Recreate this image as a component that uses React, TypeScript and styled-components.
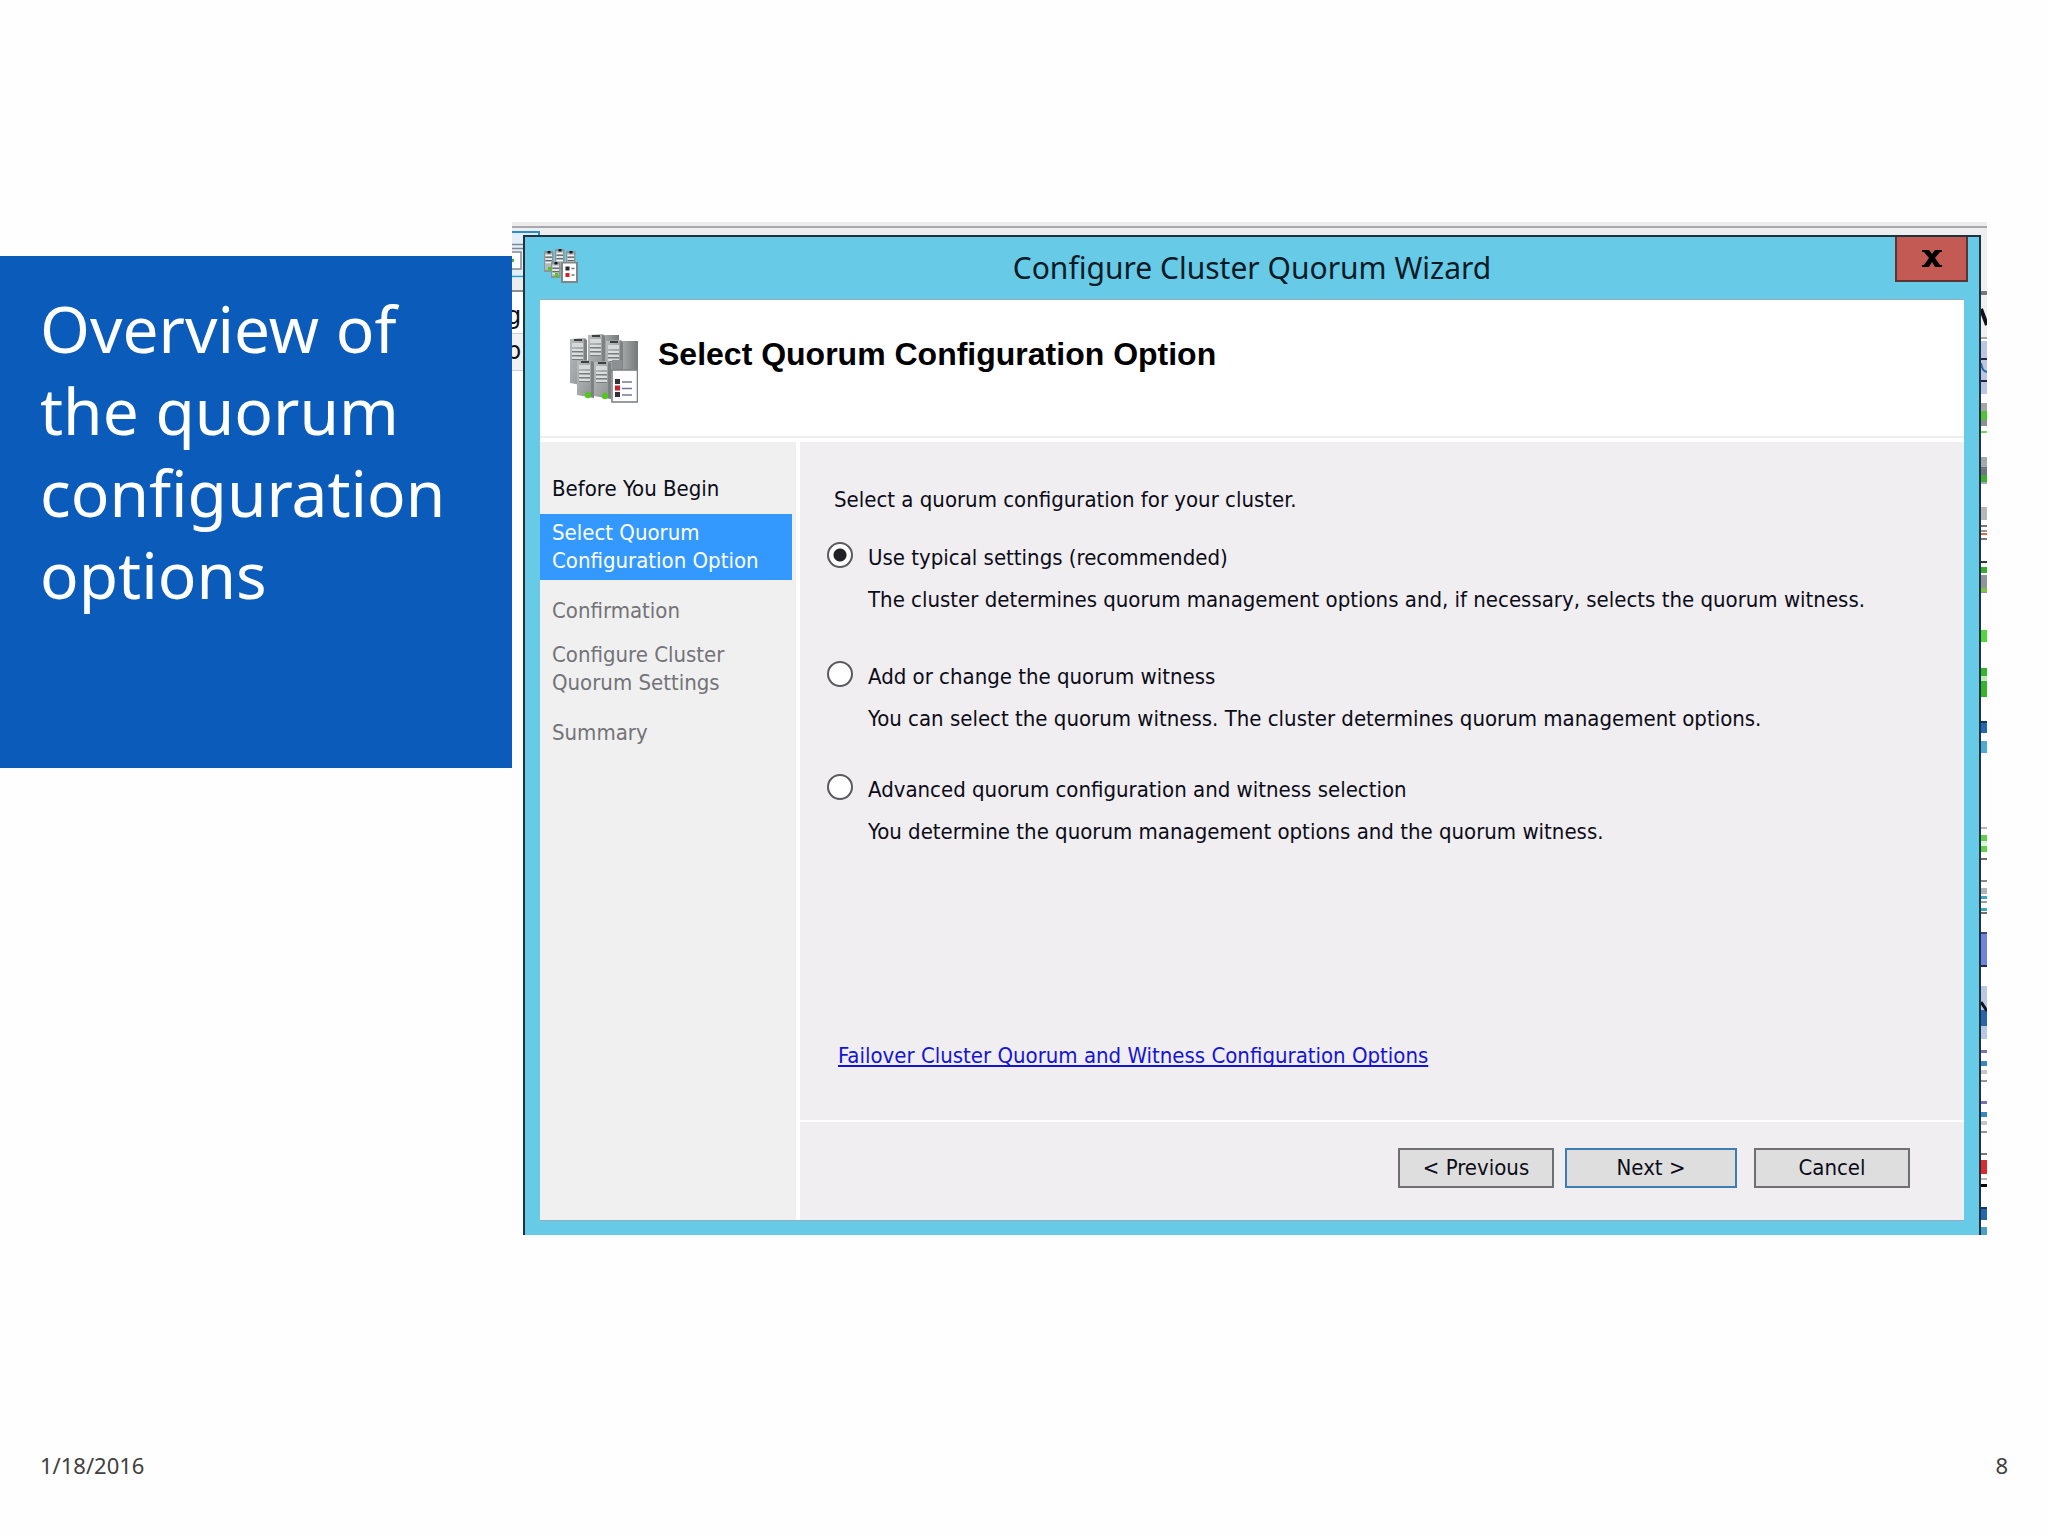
import React, { useState } from "react";
import styled, { createGlobalStyle } from "styled-components";

const GlobalStyle = createGlobalStyle`
  * { box-sizing: border-box; }
  body { margin: 0; background: #fefefe; }
  h1, h2, p, ol { margin: 0; padding: 0; font-weight: 400; }
`;

const humanist = `"Noto Sans", "Open Sans", sans-serif`;
const dialogFont = `"DejaVu Sans Condensed", "DejaVu Sans", sans-serif`;

const Slide = styled.div`
  min-height: 100vh;
  display: flex;
  flex-direction: column;
  justify-content: space-between;
  padding-top: 222px;
  font-family: ${humanist};
`;

const SlideBody = styled.main`
  display: grid;
  grid-template-columns: 25vw 1fr;
  align-items: start;
  padding-right: 61px;
`;

const Tile = styled.header`
  margin-top: 34px;
  aspect-ratio: 1;
  padding: 32px 40px;
  background: #0b5bbb;
`;

const TileTitle = styled.h1`
  color: #fff;
  font-size: 64px;
  line-height: 82px;
`;

const SlideFooter = styled.footer`
  display: flex;
  justify-content: space-between;
  padding: 0 40px 57px;
  color: #404040;
  font-size: 22px;
  line-height: 28px;
`;

const Desktop = styled.section`
  display: grid;
  grid-template-columns: 11px 1fr 6px;
`;

const DesktopTop = styled.div`
  grid-column: 1 / -1;
  height: 13px;
  background: linear-gradient(#ececec 0 4px, #a9a9ad 4px 6px, #eeeef1 6px);
`;

const TabOutline = styled.svg`
  display: block;
`;

const Sliver = styled.svg`
  display: block;
  width: 100%;
`;

const Dialog = styled.section`
  display: flex;
  flex-direction: column;
  padding: 0 15px;
  border: 2px solid #20333c;
  border-bottom: 0;
  background: #67cbe8;
`;

const TitleBar = styled.header`
  display: grid;
  grid-template-columns: 1fr auto 1fr;
  align-items: start;
  height: 62px;
  margin: 0 -4px;
`;

const TitleIcon = styled.svg`
  width: 34px;
  height: 35px;
  margin: 12px 0 0 8px;
`;

const TitleText = styled.h2`
  color: #071a26;
  font-size: 30px;
  line-height: 40px;
  padding-top: 11px;
`;

const CloseButton = styled.button`
  justify-self: end;
  width: 73px;
  height: 45px;
  padding: 0;
  border: 2px solid #5c3433;
  border-top: 0;
  background: #c35a53;
  color: #000;
  display: grid;
  place-items: center;
`;

const Client = styled.div`
  display: flex;
  flex-direction: column;
  border-top: 1px solid #8fb0bd;
  border-bottom: 1px solid #8fb0bd;
  margin-bottom: 14px;
  background: #fff;
  font-family: ${dialogFont};
  font-size: 22px;
  line-height: 28px;
  color: #0c0c18;
`;

const PageHeader = styled.header`
  display: flex;
  align-items: flex-start;
  gap: 20px;
  height: 138px;
  padding: 34px 30px 0;
  border-bottom: 2px solid #ececee;
  margin-bottom: 4px;
`;

const HeaderIcon = styled.svg`
  flex: none;
  width: 68px;
  height: 69px;
`;

const PageTitle = styled.h2`
  font-family: "Liberation Sans", Arial, sans-serif;
  font-size: 32px;
  font-weight: 700;
  line-height: 40px;
  color: #000;
`;

const Columns = styled.div`
  display: grid;
  grid-template-columns: 256px 1fr;
  gap: 4px;
`;

const Steps = styled.ol`
  list-style: none;
  display: flex;
  flex-direction: column;
  gap: 6px;
  background: #f0f0f0;
  && { padding: 28px 4px 0 0; }
`;

type StepState = "done" | "current" | "pending";

const Step = styled.li<{ $state: StepState; $wrapped?: boolean }>`
  padding: 5px 24px 5px 12px;
  margin-bottom: ${(p) => (p.$wrapped ? 6 : 0)}px;
  background: ${(p) => (p.$state === "current" ? "#3399ff" : "transparent")};
  color: ${(p) => ({ done: "#0c0c18", current: "#fff", pending: "#737378" })[p.$state]};
`;

const Page = styled.div`
  display: flex;
  flex-direction: column;
  gap: 2px;
`;

const PageContent = styled.form`
  display: flex;
  flex-direction: column;
  align-items: flex-start;
  height: 678px;
  padding: 44px 27px 50px;
  background: #f0eef0;
`;

const Prompt = styled.p`
  && {
    padding: 0 7px;
    margin-bottom: 30px;
  }
`;

const Option = styled.div<{ $after: number }>`
  display: grid;
  grid-template-columns: 26px 1fr;
  column-gap: 15px;
  row-gap: 14px;
  margin-bottom: ${(p) => p.$after}px;
`;

const Radio = styled.input`
  appearance: none;
  width: 26px;
  height: 26px;
  margin: -2px 0 0;
  border: 2px solid #5a5a5e;
  border-radius: 50%;
  background: #fff;
  &:checked {
    background: radial-gradient(circle, #222226 0 6px, #fff 7px);
  }
`;

const OptionDetail = styled.p`
  grid-column: 2;
`;

const HelpLink = styled.a`
  margin: auto 11px 0;
  color: #1414d8;
  text-decoration: underline;
  text-decoration-thickness: 2px;
  text-underline-offset: 2px;
  text-decoration-skip-ink: none;
`;

const Actions = styled.footer`
  display: flex;
  justify-content: flex-end;
  gap: 11px;
  height: 98px;
  padding: 26px 54px 0 0;
  background: #f0eef0;
`;

const ActionButton = styled.button<{ $primary?: boolean }>`
  width: ${(p) => (p.$primary ? 172 : 156)}px;
  height: 40px;
  margin-right: ${(p) => (p.$primary ? 6 : 0)}px;
  padding: 0;
  border: 2px solid ${(p) => (p.$primary ? "#3a7eb3" : "#6f6f72")};
  background: #dedede;
  color: inherit;
  font: inherit;
`;

function Tower({ x, y, h = 34, led }: { x: number; y: number; h?: number; led?: boolean }) {
  return (
    <g transform={`translate(${x} ${y})`}>
      <path d={`M0 1 L15 0 L17 2 V${h} L0 ${h - 3} Z`} fill="url(#steel)" />
      <path d={`M14 1 L17 2 V${h} L14 ${h - 1} Z`} fill="#7d8182" />
      <rect x="4" y="1" width="8" height="2" fill="#3c4042" />
      <rect x="2" y="5" width="11" height="4" fill="#d6d9da" />
      <path d="M2 12h11M2 16h11M2 20h11" stroke="#eceeee" strokeWidth="1.6" />
      <path d="M2 13.5h11M2 17.5h11M2 21.5h11" stroke="#777c7e" strokeWidth="1" />
      {led && <circle cx="11" cy={h - 3} r="3.2" fill="#55c522" />}
    </g>
  );
}

function ClusterIcon() {
  return (
    <HeaderIcon viewBox="0 0 68 69" aria-hidden="true">
      <defs>
        <linearGradient id="steel" x1="0" x2="1" y1="0" y2="1">
          <stop offset="0" stopColor="#b9bdbe" />
          <stop offset="1" stopColor="#8c9091" />
        </linearGradient>
        <linearGradient id="side" x1="0" x2="1">
          <stop offset="0" stopColor="#a5a9aa" />
          <stop offset="1" stopColor="#747879" />
        </linearGradient>
      </defs>
      <rect x="34" y="1" width="15" height="34" fill="url(#side)" />
      <rect x="52" y="7" width="16" height="30" fill="url(#side)" />
      <Tower x={0} y={4} h={48} />
      <Tower x={18} y={0} />
      <Tower x={36} y={6} />
      <rect x="42" y="26" width="10" height="10" fill="#8b9092" />
      <Tower x={7} y={26} h={38} led />
      <Tower x={24} y={27} h={38} led />
      <rect x="42" y="36" width="25.5" height="32" fill="#fdfdff" stroke="#7e8385" strokeWidth="1.6" />
      <rect x="45" y="45" width="5" height="5" fill="#303238" />
      <rect x="45" y="51.500" width="5" height="5" fill="#c9222c" />
      <rect x="45" y="58" width="5" height="5" fill="#303238" />
      <path d="M52 48h10M52 54.500h10M52 61h10" stroke="#77759c" strokeWidth="1.6" />
    </HeaderIcon>
  );
}

function SmallTower({ x, y, h = 20, led }: { x: number; y: number; h?: number; led?: boolean }) {
  return (
    <g transform={`translate(${x} ${y})`}>
      <rect width="9.500" height={h} fill="#8d9496" />
      <rect x="1" y="2" width="7" height={h - 4} fill="#b4babc" />
      <rect x="3.500" y="0" width="3" height="2.500" fill="#15191b" />
      <path d="M1.500 4.500h6.500M1.500 8h6.500M1.500 11.500h6.500" stroke="#f2f4f4" strokeWidth="1.6" />
      <path d="M1.500 6.200h6.500M1.500 9.700h6.500" stroke="#4f5659" strokeWidth="1" />
      {led && <rect x="4" y={h - 5} width="3.500" height="4" fill="#4cc724" />}
    </g>
  );
}

function WindowIcon() {
  return (
    <TitleIcon viewBox="0 0 34 35" aria-hidden="true">
      <SmallTower x={0} y={2} h={21} led />
      <SmallTower x={11} y={0} />
      <SmallTower x={22} y={2} />
      <SmallTower x={7} y={13} h={16} led />
      <rect x="17" y="13" width="17" height="21" fill="#808688" />
      <rect x="19" y="14.500" width="13" height="17.500" fill="#fff" />
      <rect x="21.500" y="17.500" width="4" height="4" fill="#26282c" />
      <rect x="21.500" y="24" width="4" height="4" fill="#d0202c" />
      <path d="M27.500 19.500h3M27.500 26h3" stroke="#6f7490" strokeWidth="1.4" />
    </TitleIcon>
  );
}

function LeftSliver() {
  return (
    <Sliver viewBox="0 0 11 140" aria-hidden="true">
      <rect width="11" height="140" fill="#fff" />
      <rect width="11" height="42" fill="#e2eff8" />
      <path d="M0 9.500h11M0 13.500h11" stroke="#7b8794" strokeWidth="1.6" />
      <rect x="-2" y="17" width="11" height="17" fill="#fff" stroke="#8b9095" strokeWidth="1.6" />
      <rect y="24" width="2" height="3" fill="#49b61f" />
      <path d="M0 41.500h11" stroke="#2f9ccc" strokeWidth="1.6" />
      <rect y="43" width="11" height="12" fill="#ececee" />
      <path d="M0 56h11" stroke="#6f7072" strokeWidth="1.6" />
      <text x="-6" y="89" fontFamily="DejaVu Sans, sans-serif" fontSize="24" fill="#101018">g</text>
      <rect y="98" width="11" height="37" fill="#f1f0f2" />
      <path d="M0 98.500h11M0 135.500h11" stroke="#cfcfd4" />
      <text x="-6" y="124" fontFamily="DejaVu Sans, sans-serif" fontSize="24" fill="#101018">p</text>
    </Sliver>
  );
}

const marks: [number, number, string][] = [
  [0, 56, "#efeef0"], [56, 4, "#77787c"], [60, 42, "#efeef0"], [102, 2, "#a5a5a8"],
  [106, 53, "#bac6e4"], [123, 2, "#20264a"], [145, 2, "#20264a"],
  [168, 8, "#a2a6a8"], [176, 14, "#52c534"], [185, 6, "#8b9092"], [196, 2, "#74d45a"],
  [222, 27, "#a5aaad"], [232, 10, "#6d7780"], [240, 7, "#3fae33"],
  [272, 13, "#b6b9bc"], [290, 2, "#777"], [295, 2, "#999"], [298, 2, "#e0664f"], [303, 2, "#77787c"],
  [326, 2, "#33363c"], [332, 6, "#36ad2c"], [340, 18, "#8f9699"], [353, 4, "#7fc344"],
  [395, 12, "#4fd83a"], [433, 29, "#34b52a"], [441, 5, "#bfe9ba"],
  [486, 2, "#143461"], [488, 10, "#2467b0"], [506, 12, "#4dabd6"],
  [592, 2, "#b5b5b9"], [600, 17, "#62cf4d"], [606, 5, "#dff5da"], [623, 2, "#66686c"],
  [645, 2, "#88898d"], [653, 6, "#b0b3b7"], [661, 3, "#37a9c4"], [666, 2, "#999ca1"], [673, 3, "#37a9c4"], [677, 2, "#6d7276"],
  [697, 2, "#3c418c"], [699, 31, "#7183dc"], [730, 2, "#26294f"],
  [751, 53, "#b9c8e4"], [775, 16, "#2766a8"],
  [815, 3, "#7a71b4"], [826, 5, "#3789c6"], [835, 4, "#c6c6ca"], [845, 2, "#94959a"],
  [866, 3, "#7a71b4"], [877, 5, "#3789c6"], [886, 4, "#c6c6ca"], [896, 2, "#94959a"],
  [918, 2, "#77787c"], [925, 14, "#dc2b30"], [943, 2, "#b5b5b9"], [949, 3, "#0a0a0e"],
  [972, 2, "#143461"], [974, 11, "#2467b0"], [992, 8, "#46a2c8"],
];

function RightSliver() {
  return (
    <Sliver viewBox="0 0 6 1000" aria-hidden="true">
      <rect width="6" height="1000" fill="#fff" />
      {marks.map(([y, h, fill]) => (
        <rect key={y} y={y} width="6" height={h} fill={fill} />
      ))}
      <path d="M0 74 L6 90" stroke="#11131c" strokeWidth="4" />
      <path d="M6 137 Q1 136 0 128" stroke="#2d65a8" strokeWidth="2" fill="none" />
      <path d="M0 767 L6 776" stroke="#11131c" strokeWidth="3" />
    </Sliver>
  );
}

const steps: { label: string; state: StepState; wrapped?: boolean }[] = [
  { label: "Before You Begin", state: "done" },
  { label: "Select Quorum Configuration Option", state: "current", wrapped: true },
  { label: "Confirmation", state: "pending" },
  { label: "Configure Cluster Quorum Settings", state: "pending", wrapped: true },
  { label: "Summary", state: "pending" },
];

const options = [
  {
    id: "typical",
    label: "Use typical settings (recommended)",
    detail:
      "The cluster determines quorum management options and, if necessary, selects the quorum witness.",
    after: 49,
  },
  {
    id: "witness",
    label: "Add or change the quorum witness",
    detail: "You can select the quorum witness. The cluster determines quorum management options.",
    after: 43,
  },
  {
    id: "advanced",
    label: "Advanced quorum configuration and witness selection",
    detail: "You determine the quorum management options and the quorum witness.",
    after: 0,
  },
];

export default function App() {
  const [choice, setChoice] = useState("typical");
  return (
    <Slide>
      <GlobalStyle />
      <SlideBody>
        <Tile>
          <TileTitle>Overview of the quorum configuration options</TileTitle>
        </Tile>
        <Desktop>
          <DesktopTop>
            <TabOutline width="28" height="13" aria-hidden="true">
              <path d="M0 13V10H27V13" fill="#dcedf7" />
              <path d="M0 10H27V13" fill="none" stroke="#2f8dc4" strokeWidth="2" />
            </TabOutline>
          </DesktopTop>
          <LeftSliver />
          <Dialog>
            <TitleBar>
              <WindowIcon />
              <TitleText>Configure Cluster Quorum Wizard</TitleText>
              <CloseButton type="button" aria-label="Close">
                <svg width="20" height="17" viewBox="0 0 20 17" aria-hidden="true">
                  <path d="M0 0H7L10 4L13 0H20V2H18L13 8L18 15H20V17H13L10 12L7 17H0V15H2L7 8L2 2H0Z" />
                </svg>
              </CloseButton>
            </TitleBar>
            <Client>
              <PageHeader>
                <ClusterIcon />
                <PageTitle>Select Quorum Configuration Option</PageTitle>
              </PageHeader>
              <Columns>
                <Steps>
                  {steps.map((s) => (
                    <Step key={s.label} $state={s.state} $wrapped={s.wrapped}>
                      {s.label}
                    </Step>
                  ))}
                </Steps>
                <Page>
                  <PageContent>
                    <Prompt>Select a quorum configuration for your cluster.</Prompt>
                    {options.map((o) => (
                      <Option key={o.id} $after={o.after}>
                        <Radio
                          type="radio"
                          name="quorum"
                          id={o.id}
                          checked={choice === o.id}
                          onChange={() => setChoice(o.id)}
                        />
                        <label htmlFor={o.id}>{o.label}</label>
                        <OptionDetail>{o.detail}</OptionDetail>
                      </Option>
                    ))}
                    <HelpLink href="#quorum-help">
                      Failover Cluster Quorum and Witness Configuration Options
                    </HelpLink>
                  </PageContent>
                  <Actions>
                    <ActionButton type="button">&lt; Previous</ActionButton>
                    <ActionButton type="button" $primary>
                      Next &gt;
                    </ActionButton>
                    <ActionButton type="button">Cancel</ActionButton>
                  </Actions>
                </Page>
              </Columns>
            </Client>
          </Dialog>
          <RightSliver />
        </Desktop>
      </SlideBody>
      <SlideFooter>
        <span>1/18/2016</span>
        <span>8</span>
      </SlideFooter>
    </Slide>
  );
}
